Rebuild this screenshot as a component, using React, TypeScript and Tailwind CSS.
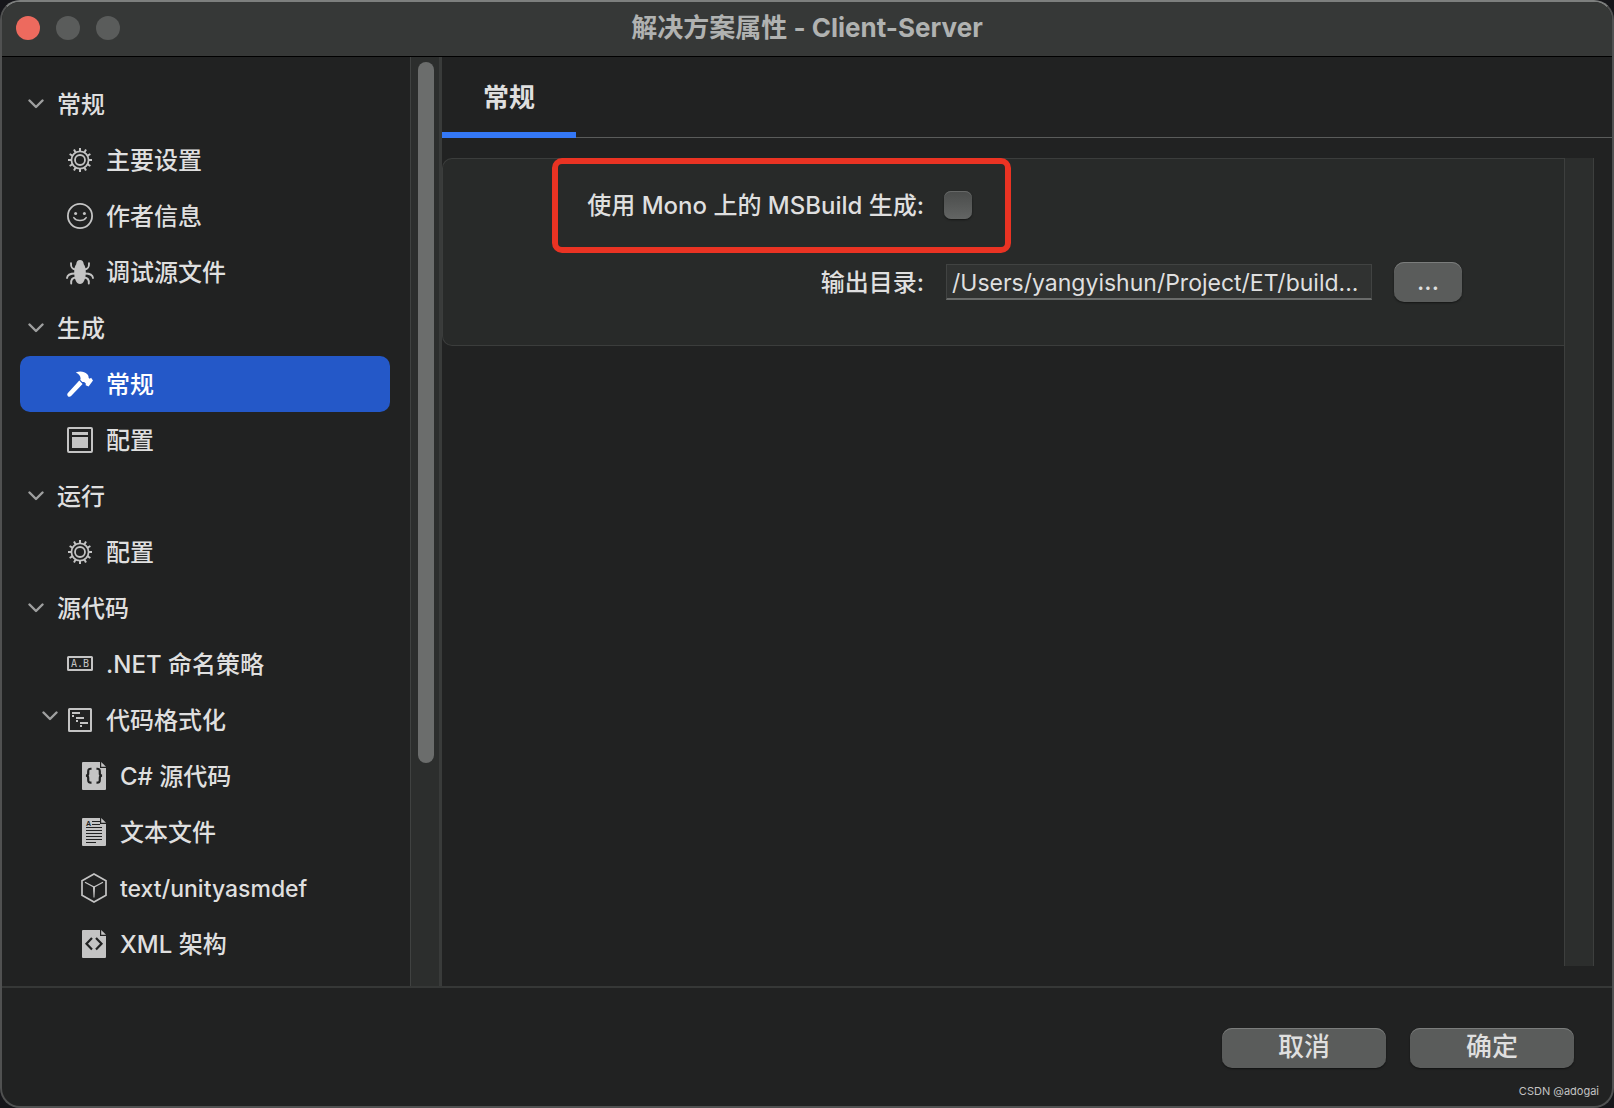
import { useState, type ReactNode } from "react";

const FG = "#c4c4c4";

function GearIcon() {
  return (
    <svg viewBox="0 0 26 26" className="h-[26px] w-[26px]" fill="none" stroke={FG}>
      <circle cx="13" cy="13" r="8.6" strokeWidth="1.8" />
      <circle cx="13" cy="13" r="5" strokeWidth="1.8" />
      {[0, 30, 60, 90, 120, 150, 180, 210, 240, 270, 300, 330].map((a) => (
        <path key={a} d="M13 1v3.2" strokeWidth="2" transform={`rotate(${a} 13 13)`} />
      ))}
    </svg>
  );
}

function SmileIcon() {
  return (
    <svg viewBox="0 0 26 26" className="h-[26px] w-[26px]" fill="none" stroke={FG}>
      <circle cx="13" cy="13" r="12.1" strokeWidth="1.8" />
      <circle cx="8.6" cy="10.4" r="1.5" fill={FG} stroke="none" />
      <circle cx="17.4" cy="10.4" r="1.5" fill={FG} stroke="none" />
      <path d="M6.8 14.6c2.6 3.9 9.8 3.9 12.4 0" strokeWidth="1.5" strokeLinecap="round" />
    </svg>
  );
}

function BugIcon() {
  return (
    <svg viewBox="0 0 28 26" className="h-[26px] w-7 shrink-0" fill="none" stroke={FG} strokeWidth="1.9" strokeLinecap="round">
      <path
        d="M14 1c2.2 0 3.6 1.5 3.8 4.2 1.4 1.8 2 4.4 2 7.8 0 7.500-2.400 12-5.800 12s-5.800-4.500-5.800-12c0-3.400.6-6 2-7.800C10.400 2.500 11.800 1 14 1z"
        fill={FG}
        stroke="none"
      />
      <path d="M9.500 10.500C6 9.800 4.800 8.500 5 4.200M18.500 10.500c3.500-.7 4.700-2 4.500-6.300" />
      <path d="M9 14.500c-4.500 0-7.500.5-8 4.500M19 14.500c4.500 0 7.500.5 8 4.500" />
      <path d="M9.500 18.500c-3.500.4-4.700 2-4.300 6M18.500 18.500c3.500.4 4.700 2 4.300 6" />
    </svg>
  );
}

function HammerIcon() {
  return (
    <svg viewBox="0 0 26 26" className="h-[26px] w-[26px]" fill="#ffffff">
      <path d="M8.800 1.600C12.500-.4 17.200.2 20.300 3.200c.9.900 1.300 2.200 1.400 3.700l1.100.900 1.300-1 1.900 2.700-4.400 6-2.900-1.300.1-1.800-1.700-1.500-1.700.2-2.100-2.200.3-1.700C13.300 4.400 11.400 2.600 8.800 1.600z" />
      <path d="M12.300 9.600l3.300 3.300L4.100 25.100C3.200 26 1.800 26.100.9 25.200c-.9-.9-.9-2.300 0-3.200z" />
    </svg>
  );
}

function WindowIcon() {
  return (
    <svg viewBox="0 0 26 26" className="h-[26px] w-[26px]">
      <rect x="1" y="1" width="24" height="24" rx="1" fill="none" stroke={FG} strokeWidth="2" />
      <path d="M5 5h16v3H5zM5 10h16v11H5z" fill={FG} />
    </svg>
  );
}

function NamingIcon() {
  return (
    <svg viewBox="0 0 26 26" className="h-[26px] w-[26px]" fill="none" stroke={FG}>
      <rect x="1" y="6" width="24" height="13" rx="0.500" strokeWidth="2" />
      <text x="13" y="16" textAnchor="middle" fill={FG} stroke="none" fontSize="10" fontFamily="DejaVu Sans Mono, monospace">
        A.B
      </text>
    </svg>
  );
}

function FormatIcon() {
  return (
    <svg viewBox="0 0 26 26" className="h-[26px] w-[26px]">
      <rect x="2" y="2" width="22" height="22" rx="0.500" fill="none" stroke={FG} strokeWidth="2" />
      <path d="M5 5h8v2H5zM5 8h2v2H5zM9 10h8v2H9zM9 13h2v2H9zM13 15h8v2h-8zM13 18h2v2h-2z" fill={FG} />
    </svg>
  );
}

function FileShape({ children }: { children: ReactNode }) {
  return (
    <svg viewBox="0 0 26 30" className="h-[30px] w-[26px]" fill="none">
      <path d="M2 1h17v6h6v21a1 1 0 0 1-1 1H2a1 1 0 0 1-1-1V2a1 1 0 0 1 1-1z" fill={FG} />
      <path d="M20.200 1L25 5.800h-4.800z" fill={FG} />
      {children}
    </svg>
  );
}

function BracesIcon() {
  return (
    <FileShape>
      <path
        d="M10.500 7.800c-2.600-.2-3.300.6-3.300 2.600v2c0 1.500-.7 2.200-2.200 2.300 1.500.1 2.200.8 2.200 2.300v2c0 2 .7 2.800 3.300 2.600M15.500 7.800c2.600-.2 3.300.6 3.300 2.600v2c0 1.500.7 2.200 2.200 2.300-1.500.1-2.200.8-2.200 2.300v2c0 2-.7 2.800-3.300 2.600"
        stroke="#212222"
        strokeWidth="2.200"
      />
    </FileShape>
  );
}

function TextFileIcon() {
  return (
    <FileShape>
      <path d="M11 4.500h8M11 7.500h8M5 10.500h16M5 13.500h16M5 16.500h16M5 19.500h16M5 22.500h16M5 25.500h10" stroke="#212222" strokeWidth="1.200" />
      <text x="7.500" y="9" textAnchor="middle" fill="#212222" fontSize="7" fontWeight="700" fontFamily="Liberation Sans, sans-serif">
        A
      </text>
    </FileShape>
  );
}

function CubeIcon() {
  return (
    <svg viewBox="0 0 26 30" className="h-[30px] w-[26px]" fill="none" stroke={FG}>
      <path d="M13 1l12 6.800v14.400L13 29 1 22.200V7.800z" strokeWidth="1.700" />
      <path d="M4 9.300l9 4.800 9-4.800" strokeWidth="1.300" />
      <path d="M11.900 13.500h2.200l-.6 11h-1z" fill={FG} stroke="none" />
    </svg>
  );
}

function XmlIcon() {
  return (
    <FileShape>
      <path d="M11 9l-5.500 5.700L11 20.400M15 9l5.500 5.700L15 20.400" stroke="#212222" strokeWidth="2.200" />
    </FileShape>
  );
}

function Chevron() {
  return (
    <svg viewBox="0 0 16 10" className="h-[10px] w-4 shrink-0" fill="none" stroke="#9fa0a0" strokeWidth="2.400" strokeLinecap="round" strokeLinejoin="round">
      <path d="M1.500 1.500L8 8l6.500-6.500" />
    </svg>
  );
}

type Row = { id: string; label: string; kind: "group" | "item" | "branch" | "leaf"; icon?: ReactNode; latin?: boolean };

const ROWS: Row[] = [
  { id: "general", label: "常规", kind: "group" },
  { id: "main", label: "主要设置", kind: "item", icon: <GearIcon /> },
  { id: "author", label: "作者信息", kind: "item", icon: <SmileIcon /> },
  { id: "debug", label: "调试源文件", kind: "item", icon: <BugIcon /> },
  { id: "build", label: "生成", kind: "group" },
  { id: "build-general", label: "常规", kind: "item", icon: <HammerIcon /> },
  { id: "build-config", label: "配置", kind: "item", icon: <WindowIcon /> },
  { id: "run", label: "运行", kind: "group" },
  { id: "run-config", label: "配置", kind: "item", icon: <GearIcon /> },
  { id: "source", label: "源代码", kind: "group" },
  { id: "naming", label: ".NET 命名策略", kind: "item", icon: <NamingIcon /> },
  { id: "format", label: "代码格式化", kind: "branch", icon: <FormatIcon /> },
  { id: "csharp", label: "C# 源代码", kind: "leaf", icon: <BracesIcon /> },
  { id: "text", label: "文本文件", kind: "leaf", icon: <TextFileIcon /> },
  { id: "asmdef", label: "text/unityasmdef", kind: "leaf", icon: <CubeIcon />, latin: true },
  { id: "xml", label: "XML 架构", kind: "leaf", icon: <XmlIcon /> },
];

const INDENT = { group: "pl-2", item: "pl-[47px]", branch: "pl-[22px]", leaf: "pl-[61px]" };

function TreeRow({ row, selected, onSelect }: { row: Row; selected: boolean; onSelect: () => void }) {
  return (
    <li>
      <button
        type="button"
        onClick={onSelect}
        aria-current={selected}
        className={`flex h-14 w-full items-center gap-[13px] rounded-[10px] text-left ${INDENT[row.kind]} ${
          selected ? "bg-[#2458c8] text-white" : "text-[#dfdfdf]"
        }`}
      >
        {row.kind === "group" && <Chevron />}
        {row.kind === "branch" && (
          <span className="-mr-1 pb-2">
            <Chevron />
          </span>
        )}
        {row.icon && <span className="flex w-[26px] shrink-0 justify-center">{row.icon}</span>}
        <span className={`whitespace-nowrap pt-0.5 ${row.latin ? "text-[23px] leading-8" : ""}`}>{row.label}</span>
      </button>
    </li>
  );
}

const PUSH =
  "h-10 rounded-[10px] bg-[#5a5c5b] shadow-[inset_0_1px_0_#7b7d7c,0_1px_2px_rgba(0,0,0,0.5)]";

export default function App() {
  const [selected, setSelected] = useState("build-general");
  const [mono, setMono] = useState(false);
  const [path, setPath] = useState("/Users/yangyishun/Project/ET/build...");

  return (
    <div className="min-h-screen bg-[#16161a] font-['Inter','Noto_Sans_CJK_SC',sans-serif] text-2xl font-medium text-[#dfdfdf]">
      <div className="relative flex min-h-screen flex-col overflow-hidden rounded-[20px] border-2 border-[#505151] border-t-[#7d7f7e] bg-[#212222]">
        <header className="relative flex h-[55px] shrink-0 items-center justify-center border-b border-black bg-[#363837]">
          <div className="absolute left-[14px] top-[14px] flex gap-4">
            <button type="button" aria-label="关闭" className="h-6 w-6 rounded-full bg-[#ed6a5e]" />
            <button type="button" aria-label="最小化" className="h-6 w-6 rounded-full bg-[#5a5c5b]" />
            <button type="button" aria-label="缩放" className="h-6 w-6 rounded-full bg-[#5a5c5b]" />
          </div>
          <h1 className="pb-0.5 text-[26px] font-bold leading-8 text-[#b0b2b1]">解决方案属性 - Client-Server</h1>
        </header>

        <div className="flex flex-1">
          <nav className="w-[408px] shrink-0 pl-[18px] pr-5 pt-[19px]">
            <ul>
              {ROWS.map((row) => (
                <TreeRow key={row.id} row={row} selected={row.id === selected} onSelect={() => setSelected(row.id)} />
              ))}
            </ul>
          </nav>
          <div className="w-8 shrink-0 border-l border-r-[3px] border-l-[#404241] border-r-[#393b3a] bg-[#2c2e2d] pl-[7px] pt-[5px]">
            <div className="h-[701px] w-4 rounded-full bg-[#6b6d6c]" />
          </div>

          <main className="flex min-w-0 flex-1 flex-col">
            <div role="tablist" className="flex h-[81px] shrink-0 border-b border-[#5a5c5b]">
              <button
                type="button"
                role="tab"
                aria-selected="true"
                className="-mb-px w-[134px] border-b-[6px] border-[#3478f6] pt-1.5 text-[26px] font-bold leading-8"
              >
                常规
              </button>
            </div>
            <div className="mb-5 mr-[18px] mt-5 flex flex-1">
              <div className="min-w-0 flex-1">
                <div className="relative h-[188px] rounded-l-[10px] border border-r-0 border-[#3b3d3c] bg-[#282a29] pt-[26px]">
                  <div className="grid grid-cols-[481px_1fr] items-center gap-x-5">
                    <label htmlFor="mono" className="whitespace-nowrap pt-0.5 text-right leading-[38px]">
                      使用 Mono 上的 MSBuild 生成:
                    </label>
                    <input
                      id="mono"
                      type="checkbox"
                      checked={mono}
                      onChange={(e) => setMono(e.target.checked)}
                      className="h-7 w-7 appearance-none rounded-[7px] bg-linear-to-b from-[#4a4c4b] to-[#636564] shadow-[inset_0_1px_0_#666867,0_1px_2px_rgba(0,0,0,0.5)] checked:from-[#3478f6] checked:to-[#3478f6]"
                    />
                  </div>
                  <div className="mt-[37px] grid grid-cols-[481px_1fr] items-center gap-x-[22px]">
                    <label htmlFor="out" className="pt-0.5 text-right leading-[38px]">
                      输出目录:
                    </label>
                    <div className="flex items-center gap-[22px]">
                      <input
                        id="out"
                        type="text"
                        value={path}
                        onChange={(e) => setPath(e.target.value)}
                        className="h-9 w-[426px] border border-b-2 border-[#414342] border-b-[#6a6c6b] bg-[#303231] pl-[5px] pt-0.5 text-[23px] font-normal outline-none"
                      />
                      <button type="button" aria-label="浏览" className={`w-[68px] ${PUSH}`}>
                        ...
                      </button>
                    </div>
                  </div>
                  <div className="pointer-events-none absolute -top-px left-[109px] h-[95px] w-[459px] rounded-[10px] border-[6px] border-[#ea3323]" />
                </div>
              </div>
              <div className="w-[30px] shrink-0 border-x border-[#3d3f3e] bg-[#2c2e2d]" />
            </div>
          </main>
        </div>

        <footer className="flex h-[120px] shrink-0 items-start justify-end gap-6 border-t-2 border-[#363837] pr-[38px] pt-10 text-[26px] leading-9">
          <button type="button" className={`w-[164px] pb-0.5 ${PUSH}`}>
            取消
          </button>
          <button type="button" className={`w-[164px] pb-0.5 ${PUSH}`}>
            确定
          </button>
        </footer>
        <p className="absolute bottom-[7px] right-[13px] font-['Inter',sans-serif] text-[11px] font-normal leading-4 text-[#c3c3c3]">
          CSDN @adogai
        </p>
      </div>
    </div>
  );
}
